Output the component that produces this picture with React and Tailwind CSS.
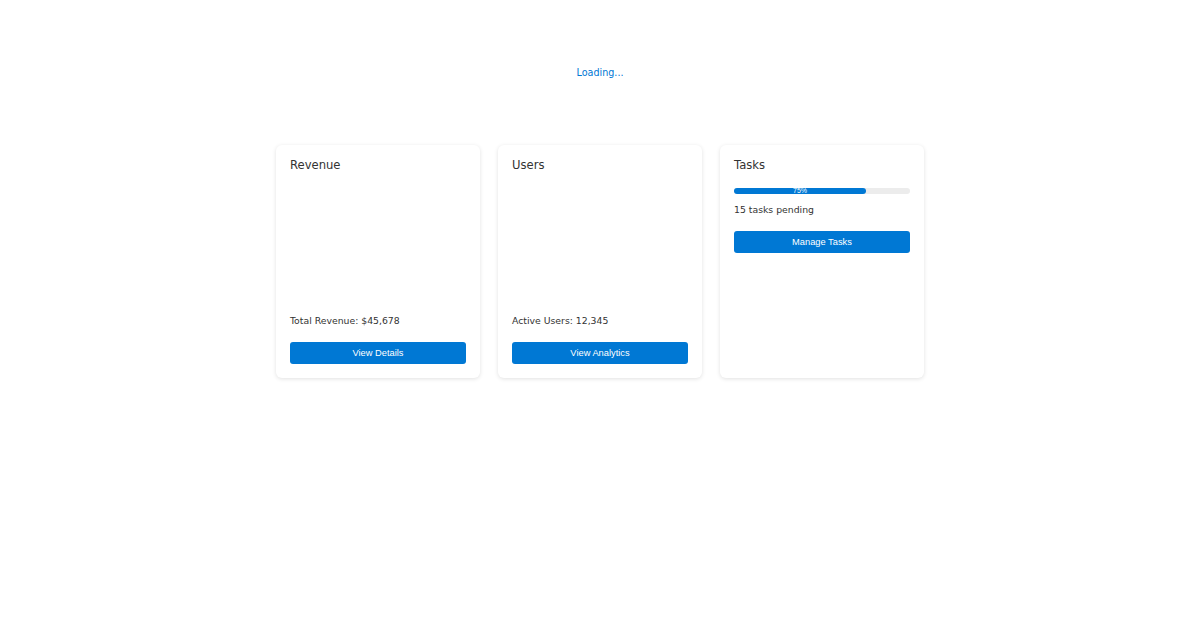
import React from "react";

function Card({ children }) {
  return (
    <div className="flex flex-col rounded-[6px] bg-white p-[14px] shadow-[0_1px_4px_rgba(0,0,0,0.12)]">
      {children}
    </div>
  );
}

function Btn({ children }) {
  return (
    <button className="block h-[22px] w-full rounded-[3px] bg-[#0078d4] text-[9.3px] leading-[22px] text-white [font-family:'Liberation_Sans',Arial,sans-serif]">
      {children}
    </button>
  );
}

export default function App() {
  return (
    <div className="min-h-[630px] w-full bg-white text-[#333] [font-family:'DejaVu_Sans',sans-serif]">
      <div className="pt-[67px] text-center text-[9.6px] leading-[12px] text-[#0078d4]">Loading...</div>
      <div className="mx-auto mt-[66px] grid w-[648px] grid-cols-3 gap-[18px]">
        <Card>
          <div className="text-[11.6px] leading-[13px]">Revenue</div>
          <div className="h-[143px]" />
          <div className="text-[9.3px] leading-[12px]">Total Revenue: $45,678</div>
          <div className="mt-[15px]">
            <Btn>View Details</Btn>
          </div>
        </Card>
        <Card>
          <div className="text-[11.6px] leading-[13px]">Users</div>
          <div className="h-[143px]" />
          <div className="text-[9.3px] leading-[12px]">Active Users: 12,345</div>
          <div className="mt-[15px]">
            <Btn>View Analytics</Btn>
          </div>
        </Card>
        <Card>
          <div className="text-[11.6px] leading-[13px]">Tasks</div>
          <div className="mt-[16px] h-[6px] w-full rounded-full bg-[#ececec]">
            <div className="flex h-[6px] w-[75%] items-center justify-center rounded-full bg-[#0078d4] text-[7px] leading-[6px] text-white [font-family:'Liberation_Sans',Arial,sans-serif]">
              75%
            </div>
          </div>
          <div className="mt-[10px] text-[9.3px] leading-[12px]">15 tasks pending</div>
          <div className="mt-[15px]">
            <Btn>Manage Tasks</Btn>
          </div>
        </Card>
      </div>
    </div>
  );
}
